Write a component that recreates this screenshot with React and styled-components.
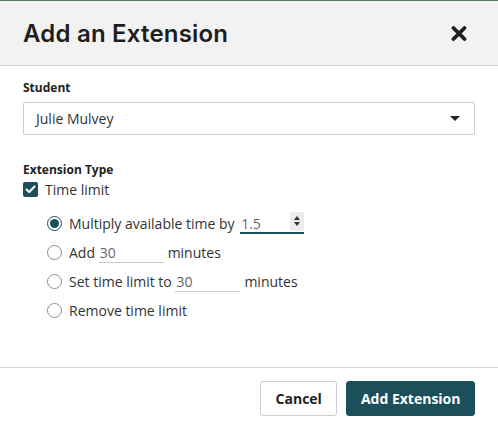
import React from 'react';
import styled, { createGlobalStyle } from 'styled-components';

const GlobalStyle = createGlobalStyle`
  body {
    margin: 0;
    background: #fff;
    font-family: "Open Sans", "Liberation Sans", sans-serif;
    color: #222;
  }
  * { box-sizing: border-box; }
`

const Modal = styled.div`
  width: 498px;
  height: 427px;
  display: flex;
  flex-direction: column;
  border-top: 1px solid #5b7b5c;
`

const Header = styled.div`
  display: flex;
  align-items: center;
  justify-content: space-between;
  height: 65px;
  padding: 0 31px 0 23px;
  background: #f2f2f2;
  border-bottom: 1px solid #d4d4d4;

  h2 {
    margin: 0;
    font-family: "Inter", "Lato", sans-serif;
    font-weight: 600;
    font-size: 24px;
    letter-spacing: 0.2px;
    color: #1e1e1e;
  }
`

const Body = styled.div`
  flex: 1;
  padding: 13px 23px 0 23px;
`

const Label = styled.div`
  font-weight: 700;
  font-size: 12px;
  color: #222;
  margin-bottom: ${p => p.gap || 6}px;
`

const Select = styled.div`
  height: 33px;
  border: 1px solid #cfcfcf;
  border-radius: 2px;
  display: flex;
  align-items: center;
  justify-content: space-between;
  padding: 0 14px 0 12px;
  font-size: 14px;
  color: #333;
  margin-bottom: 26px;
`

const Caret = styled.span`
  width: 0;
  height: 0;
  border-left: 5px solid transparent;
  border-right: 5px solid transparent;
  border-top: 5px solid #222;
`

const CheckRow = styled.div`
  display: flex;
  align-items: center;
  gap: 7px;
  font-size: 14px;
  color: #333;
  margin-bottom: 14px;
`

const CheckBox = styled.span`
  width: 15px;
  height: 15px;
  border-radius: 2px;
  background: #1b4f5a;
  display: flex;
  align-items: center;
  justify-content: center;
`

const Options = styled.div`
  padding-left: 24px;
  display: flex;
  flex-direction: column;
  gap: 9px;
`

const OptionRow = styled.div`
  display: flex;
  align-items: center;
  height: 20px;
  font-size: 14px;
  color: #333;
  white-space: pre;
`

const Radio = styled.span`
  width: 15px;
  height: 15px;
  border-radius: 50%;
  border: 1px solid ${p => (p.checked ? '#1b4f5a' : '#8c8c8c')};
  margin-right: 7px;
  display: flex;
  align-items: center;
  justify-content: center;

  &::after {
    content: '';
    display: ${p => (p.checked ? 'block' : 'none')};
    width: 9px;
    height: 9px;
    border-radius: 50%;
    background: #1b4f5a;
  }
`

const Field = styled.span`
  display: inline-flex;
  align-items: center;
  justify-content: space-between;
  width: ${p => p.width}px;
  height: 21px;
  margin: 0 ${p => p.after}px 0 ${p => (p.active ? 2 : 0)}px;
  padding-left: 1px;
  border-bottom: ${p => (p.active ? '2px solid #1b4f5a' : '1px solid #c8c8c8')};
  color: #666;
  font-size: 14px;
  padding-top: 2px;
`

const Spinner = styled.span`
  width: 14px;
  height: 19px;
  background: #ececec;
  display: flex;
  flex-direction: column;
  align-items: center;
  justify-content: center;
  gap: 2px;
  margin-top: -4px;

  i {
    width: 0;
    height: 0;
    border-left: 3px solid transparent;
    border-right: 3px solid transparent;
  }
  i.up { border-bottom: 4px solid #333; }
  i.down { border-top: 4px solid #333; }
`

const Footer = styled.div`
  border-top: 1px solid #d4d4d4;
  height: 60px;
  display: flex;
  align-items: flex-start;
  justify-content: flex-end;
  gap: 9px;
  padding: 13px 23px 0 0;
`

const Button = styled.button`
  height: 35px;
  padding: 0 ${p => (p.primary ? 13.5 : 14.5)}px;
  border-radius: 3px;
  font-family: "Open Sans", "Liberation Sans", sans-serif;
  font-weight: 700;
  font-size: 14px;
  border: 1px solid ${p => (p.primary ? '#1b4f5a' : '#cfcfcf')};
  background: ${p => (p.primary ? '#1b4f5a' : '#fff')};
  color: ${p => (p.primary ? '#fff' : '#222')};
`

const App = () => {
  return (
    <Modal>
      <GlobalStyle />
      <Header>
        <h2>Add an Extension</h2>
        <svg width="16" height="15" viewBox="0 0 16 15">
          <path d="M2.5 2 L13.5 13 M13.5 2 L2.5 13" stroke="#1e1e1e" strokeWidth="3.8" strokeLinecap="round" />
        </svg>
      </Header>

      <Body>
        <Label gap={6}>Student</Label>
        <Select>
          <span>Julie Mulvey</span>
          <Caret />
        </Select>

        <Label gap={2}>Extension Type</Label>
        <CheckRow>
          <CheckBox>
            <svg width="11" height="9" viewBox="0 0 11 9">
              <path d="M1.5 4.5 L4.2 7 L9.5 1.5" stroke="#fff" strokeWidth="2" fill="none" strokeLinecap="round" strokeLinejoin="round" />
            </svg>
          </CheckBox>
          Time limit
        </CheckRow>

        <Options>
          <OptionRow>
            <Radio checked />
            {'Multiply available time by '}
            <Field width={64} after={0} active>
              1.5
              <Spinner><i className="up" /><i className="down" /></Spinner>
            </Field>
          </OptionRow>
          <OptionRow>
            <Radio />
            {'Add '}
            <Field width={65} after={4}>30</Field>
            minutes
          </OptionRow>
          <OptionRow>
            <Radio />
            {'Set time limit to '}
            <Field width={65} after={4}>30</Field>
            minutes
          </OptionRow>
          <OptionRow>
            <Radio />
            Remove time limit
          </OptionRow>
        </Options>
      </Body>

      <Footer>
        <Button>Cancel</Button>
        <Button primary>Add Extension</Button>
      </Footer>
    </Modal>
  )
}

export default App;
